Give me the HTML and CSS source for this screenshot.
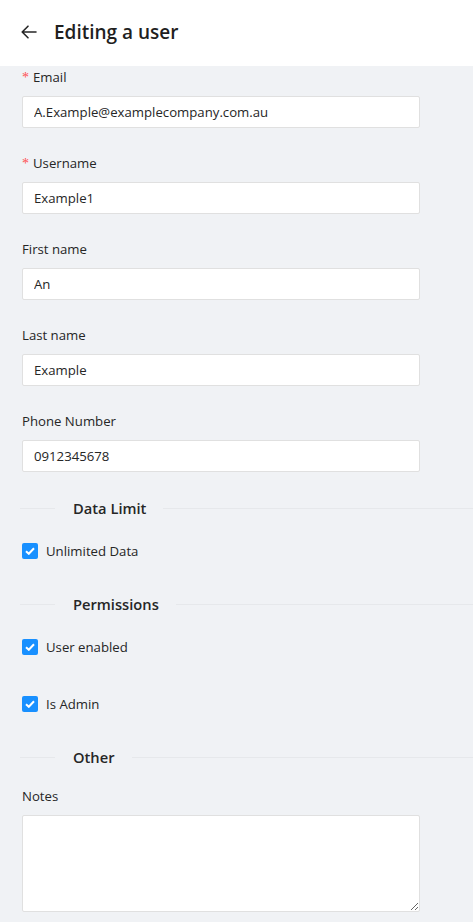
FILE: index.html
```html
<!DOCTYPE html>
<html lang="en">
<head>
<meta charset="utf-8">
<title>Editing a user</title>
<link rel="stylesheet" href="styles.css">
</head>
<body>
<div class="page">
  <header class="header">
    <button class="back" aria-label="Back">
      <svg width="16" height="16" viewBox="0 0 16 16" fill="none" stroke="#262626" stroke-width="1.6" stroke-linecap="round" stroke-linejoin="round"><path d="M15 8H1.5M7 2.2L1.2 8L7 13.8"/></svg>
    </button>
    <h1 class="title">Editing a user</h1>
  </header>
  <main class="form">
    <div class="field">
      <label class="label"><span class="req">*</span>Email</label>
      <input class="input" type="text" value="A.Example@examplecompany.com.au">
    </div>
    <div class="field">
      <label class="label"><span class="req">*</span>Username</label>
      <input class="input" type="text" value="Example1">
    </div>
    <div class="field">
      <label class="label">First name</label>
      <input class="input" type="text" value="An">
    </div>
    <div class="field">
      <label class="label">Last name</label>
      <input class="input" type="text" value="Example">
    </div>
    <div class="field">
      <label class="label">Phone Number</label>
      <input class="input" type="text" value="0912345678">
    </div>

    <div class="divider"><span class="divider-text">Data Limit</span></div>
    <div class="check-row"><span class="box"><svg width="10" height="8" viewBox="0 0 10 8"><path d="M1 4.2L3.8 6.8L9 1.2" fill="none" stroke="#fff" stroke-width="2"/></svg></span><span class="check-label">Unlimited Data</span></div>

    <div class="divider"><span class="divider-text">Permissions</span></div>
    <div class="check-row"><span class="box"><svg width="10" height="8" viewBox="0 0 10 8"><path d="M1 4.2L3.8 6.8L9 1.2" fill="none" stroke="#fff" stroke-width="2"/></svg></span><span class="check-label">User enabled</span></div>
    <div class="check-row"><span class="box"><svg width="10" height="8" viewBox="0 0 10 8"><path d="M1 4.2L3.8 6.8L9 1.2" fill="none" stroke="#fff" stroke-width="2"/></svg></span><span class="check-label">Is Admin</span></div>

    <div class="divider divider-other"><span class="divider-text">Other</span></div>
    <div class="field field-notes">
      <label class="label">Notes</label>
      <textarea class="textarea"></textarea>
    </div>
  </main>
</div>
</body>
</html>
```

FILE: styles.css
```css
* { box-sizing: border-box; }
html, body { margin: 0; padding: 0; background: #fff; }
body {
  font-family: "Open Sans", "Noto Sans", "Liberation Sans", sans-serif;
  color: rgba(0,0,0,0.85);
  font-size: 14px;
  overflow: hidden;
}
.page { width: 474px; height: 922px; display: flex; flex-direction: column; }
.header {
  height: 66px;
  background: #fff;
  display: flex;
  align-items: center;
  padding-left: 21px;
  flex-shrink: 0;
}
.back {
  border: 0; background: none; padding: 0; margin: 0;
  width: 17px; height: 16px; display: flex; align-items: center;
  margin-top: -3px;
}
.title {
  margin: 0 0 0 16px;
  font-size: 19px;
  font-weight: 600;
  color: #1f1f1f;
  line-height: 28px;
  margin-top: -3px;
}
.form {
  flex: 1;
  background: #f0f2f5;
  margin-right: 1px;
  padding: 0 0 0 22px;
  overflow: hidden;
}
.field { display: flex; flex-direction: column; margin-bottom: 24px; width: 398px; }
.label {
  height: 22px; line-height: 22px; margin-bottom: 8px;
  font-size: 13.2px; color: #262626;
}
.req { color: #ff4d4f; margin-right: 4px; font-family: "Liberation Serif", serif; font-size: 14px; }
.input {
  height: 32px; width: 398px;
  border: 1px solid #e0e0e0; border-radius: 2px;
  background: #fff; padding: 4px 11px;
  font-family: inherit; font-size: 13.2px; color: #262626;
  outline: none;
}
.divider {
  display: flex; align-items: center;
  height: 24px; margin-left: -2px; margin-right: -2px;
  margin-bottom: 15px;
}
.divider::before { content: ""; width: 35px; border-top: 1px solid #e6e8eb; }
.divider::after { content: ""; flex: 1; border-top: 1px solid #e6e8eb; }
.divider-text {
  padding: 0 17px 0 18px;
  font-size: 14.7px; font-weight: 600; color: #262626; line-height: 24px;
}
.check-row {
  display: flex; align-items: center; height: 32px; margin-bottom: 25px;
}
.box {
  width: 16px; height: 16px; border-radius: 2px; background: #1890ff;
  display: flex; align-items: center; justify-content: center;
}
.check-label { padding-left: 8px; font-size: 13.2px; color: #262626; }
.divider-other { margin-bottom: 16px; }
.field-notes { margin-bottom: 0; }
.textarea {
  width: 398px; height: 97px;
  border: 1px solid #e0e0e0; border-radius: 2px; background: #fff;
  resize: vertical; font-family: inherit; outline: none;
}
```
